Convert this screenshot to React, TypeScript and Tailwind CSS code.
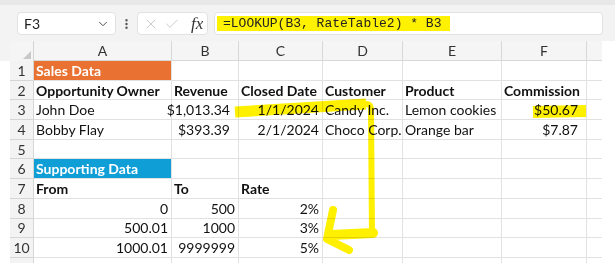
import { Check, ChevronDown, EllipsisVertical, X } from "lucide-react";

type Cell = {
  text?: string;
  align?: "left" | "right";
  bold?: boolean;
  money?: boolean;
  fill?: string;
};

const cols = [
  { name: "A", w: "w-[138px]" },
  { name: "B", w: "w-[67px]" },
  { name: "C", w: "w-[84px]" },
  { name: "D", w: "w-[80px]" },
  { name: "E", w: "w-[99px]" },
  { name: "F", w: "w-[85px]" },
  { name: "", w: "w-[15px]" },
];

const L = (text: string, bold = false): Cell => ({ text, bold });
const R = (text: string, money = false): Cell => ({ text, align: "right", money });

const rows: Cell[][] = [
  [{ text: "Sales Data", bold: true, fill: "bg-[#e97132] text-white" }],
  [L("Opportunity Owner", true), L("Revenue", true), L("Closed Date", true), L("Customer", true), L("Product", true), L("Commission", true)],
  [L("John Doe"), R("$1,013.34", true), R("1/1/2024"), L("Candy Inc."), L("Lemon cookies"), R("$50.67", true)],
  [L("Bobby Flay"), R("$393.39", true), R("2/1/2024"), L("Choco Corp."), L("Orange bar"), R("$7.87", true)],
  [],
  [{ text: "Supporting Data", bold: true, fill: "bg-[#0f9ed5] text-white" }],
  [L("From", true), L("To", true), L("Rate", true)],
  [R("0"), R("500"), R("2%")],
  [R("500.01"), R("1000"), R("3%")],
  [R("1000.01"), R("9999999"), R("5%")],
];

function FormulaBar() {
  return (
    <div className="h-[41px] bg-[#f3f3f3] border-t-[5px] border-[#e8e8e8] flex items-start pt-[7px] pl-[17px] pr-[12px] gap-[4px]">
      <div className="w-[99px] h-[23px] bg-white rounded-[4px] border border-[#e2e2e2] flex items-center pl-[6px] pr-[5px] text-[14px] text-[#222]">
        <span className="flex-1">F3</span>
        <ChevronDown size={14} strokeWidth={1.6} className="text-[#444]" />
      </div>
      <div className="w-[13px] h-[23px] flex items-center justify-center text-[#555]">
        <EllipsisVertical size={14} strokeWidth={2.4} />
      </div>
      <div className="w-[71px] h-[23px] bg-white rounded-[4px] border border-[#e2e2e2] flex items-center pl-[5px] gap-[5px] text-[#c3c3c3]">
        <X size={16} strokeWidth={1.3} />
        <Check size={16} strokeWidth={1.3} />
        <span className="ml-[6px] font-['Liberation_Serif',serif] italic text-[17px] text-[#333] leading-none">
          fx
        </span>
      </div>
      <div className="ml-[2px] flex-1 h-[23px] bg-white rounded-[4px] border border-[#e2e2e2] flex items-center pl-[2px]">
        <span className="bg-[#fff200] pl-[6px] pr-[9px] h-[15px] flex items-center font-['Liberation_Mono',monospace] text-[13px] text-[#222]">
          =LOOKUP(B3, RateTable2) * B3
        </span>
      </div>
    </div>
  );
}

function HeaderRow() {
  return (
    <div className="flex h-[20px] bg-[#f5f5f5]">
      <div className="w-[10px] bg-[#f3f3f3]" />
      <div className="w-[24px] relative border-r border-[#d4d4d4]">
        <div className="absolute right-[2px] bottom-[2px] w-0 h-0 border-l-[8px] border-l-transparent border-b-[8px] border-b-[#c8c8c8]" />
      </div>
      {cols.map((c, i) => (
        <div
          key={i}
          className={`${c.w} flex items-center justify-center text-[14px] text-[#333] ${c.name ? "border-r border-[#d8d8d8]" : ""} border-b border-[#d8d8d8]`}
        >
          {c.name}
        </div>
      ))}
    </div>
  );
}

function GridRow({ n, cells }: { n: number; cells: Cell[] }) {
  return (
    <div className="flex h-[19.7px]">
      <div className="w-[10px] bg-white" />
      <div className="w-[24px] bg-[#f3f3f3] border-r border-b border-[#d6d6d6] flex items-center justify-center text-[14px] text-[#333]">
        {n}
      </div>
      {cols.map((c, i) => {
        const cell = cells[i] ?? {};
        const last = i === cols.length - 1;
        return (
          <div
            key={i}
            className={`${c.w} ${last ? "" : "border-r"} border-b border-[#e1e1e1] flex items-center whitespace-nowrap overflow-visible text-[14px] ${cell.fill ?? "text-[#111]"} ${cell.bold ? "font-bold" : ""} ${cell.align === "right" ? "justify-end" : "justify-start"} ${cell.money ? "pr-[8px]" : cell.align === "right" ? "pr-[3px]" : "pl-[2px]"}`}
          >
            {cell.text}
          </div>
        );
      })}
    </div>
  );
}

function Marker() {
  return (
    <svg className="absolute inset-0 mix-blend-multiply pointer-events-none" width="615" height="275" viewBox="0 0 615 275">
      <g stroke="#fff000" fill="none" strokeLinecap="round" strokeLinejoin="round">
        <path d="M235 112 L300 108 L366 104" strokeWidth="11" strokeLinecap="butt" />
        <path d="M533 112 L586 111" strokeWidth="12" strokeLinecap="butt" />
        <path d="M366 104 Q372 104 371 112 L372 234" strokeWidth="6" />
        <path d="M373 233 L331 235" strokeWidth="10" />
        <path d="M333 210 L327 239 L349 250" strokeWidth="8" />
      </g>
    </svg>
  );
}

export default function App() {
  return (
    <div className="relative w-[615px] h-[275px] bg-white overflow-hidden font-['Lato',sans-serif]">
      <FormulaBar />
      <div className="h-[223px] overflow-hidden w-[602px]">
        <HeaderRow />
        {rows.map((cells, i) => (
          <GridRow key={i} n={i + 1} cells={cells} />
        ))}
        <div className="flex h-[5px]">
          <div className="w-[10px]" />
          <div className="w-[24px] bg-[#f3f3f3] border-r border-[#d6d6d6]" />
          {cols.slice(0, -1).map((c, i) => (
            <div key={i} className={`${c.w} border-r border-[#e1e1e1]`} />
          ))}
        </div>
      </div>
      <Marker />
    </div>
  );
}
